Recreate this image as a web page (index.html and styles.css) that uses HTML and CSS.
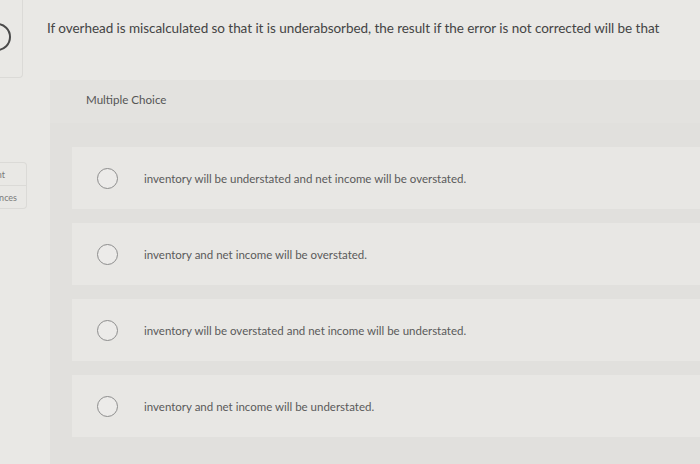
FILE: index.html
```html
<!DOCTYPE html>
<html>
<head>
<meta charset="utf-8">
<link rel="stylesheet" href="styles.css">
</head>
<body>
<div class="page">
  <aside class="side">
    <div class="timer-card">
      <svg class="timer" width="34" height="40" viewBox="0 0 34 40"><circle cx="17" cy="20" r="13" fill="none" stroke="#4a4a4a" stroke-width="2"/></svg>
    </div>
    <div class="tools-card">
      <div class="tool">Print</div>
      <div class="tool">References</div>
    </div>
  </aside>
  <main class="main">
    <p class="question">If overhead is miscalculated so that it is underabsorbed, the result if the error is not corrected will be that</p>
    <section class="panel">
      <div class="panel-head">Multiple Choice</div>
      <div class="options">
        <label class="option"><span class="radio"></span><span class="opt-text">inventory will be understated and net income will be overstated.</span></label>
        <label class="option"><span class="radio"></span><span class="opt-text">inventory and net income will be overstated.</span></label>
        <label class="option"><span class="radio"></span><span class="opt-text">inventory will be overstated and net income will be understated.</span></label>
        <label class="option"><span class="radio"></span><span class="opt-text">inventory and net income will be understated.</span></label>
      </div>
    </section>
  </main>
</div>
</body>
</html>
```
FILE: styles.css
```css
html, body {
  margin: 0;
  padding: 0;
  height: 100%;
}
body {
  background: #e9e8e5;
  font-family: Lato, "Open Sans", sans-serif;
  color: #444;
  overflow: hidden;
}
.page {
  display: flex;
  height: 464px;
}
.side {
  width: 28px;
  flex: none;
  display: flex;
  flex-direction: column;
}
.timer-card {
  margin-left: -12px;
  width: 35px;
  height: 78px;
  border: 1px solid #dbdad7;
  border-top: none;
  border-left: none;
  border-radius: 0 0 4px 0;
  box-sizing: border-box;
  display: flex;
  align-items: center;
  overflow: hidden;
}
.timer {
  flex: none;
  margin-left: -8px;
  margin-top: -4px;
}
.tools-card {
  margin-top: 84px;
  margin-left: -60px;
  width: 87px;
  border: 1px solid #dbdad7;
  border-left: none;
  border-radius: 0 4px 4px 0;
  box-sizing: border-box;
  overflow: hidden;
}
.tool {
  height: 22px;
  line-height: 24px;
  font-size: 9px;
  color: #7a7a7a;
  text-align: right;
  padding-right: 9px;
  white-space: nowrap;
}
.tool:first-child {
  padding-right: 21px;
}
.tool + .tool {
  border-top: 1px solid #dbdad7;
}
.main {
  flex: 1;
  margin-left: 19px;
  display: flex;
  flex-direction: column;
}
.question {
  margin: 0;
  padding-top: 20px;
  height: 80px;
  flex: none;
  box-sizing: border-box;
  font-size: 13.5px;
  line-height: 16px;
  color: #444;
  white-space: nowrap;
  letter-spacing: -0.05px;
}
.panel {
  flex: 1;
  margin-left: 3px;
  background: #e1e0dd;
  display: flex;
  flex-direction: column;
}
.panel-head {
  height: 43px;
  padding-left: 36px;
  padding-top: 13px;
  box-sizing: border-box;
  font-size: 11.6px;
  color: #555;
  background: #e3e2df;
}
.options {
  display: flex;
  flex-direction: column;
  gap: 14px;
  padding-top: 24px;
  padding-left: 22px;
}
.option {
  height: 62px;
  display: flex;
  align-items: center;
  background: #e8e7e4;
  padding-left: 25px;
}
.radio {
  width: 19px;
  height: 19px;
  border: 1.5px solid #8d8d8d;
  border-radius: 50%;
  background: #ecebe9;
  flex: none;
}
.opt-text {
  margin-left: 26px;
  font-size: 11.5px;
  color: #5a5a5a;
  white-space: nowrap;
}
```
